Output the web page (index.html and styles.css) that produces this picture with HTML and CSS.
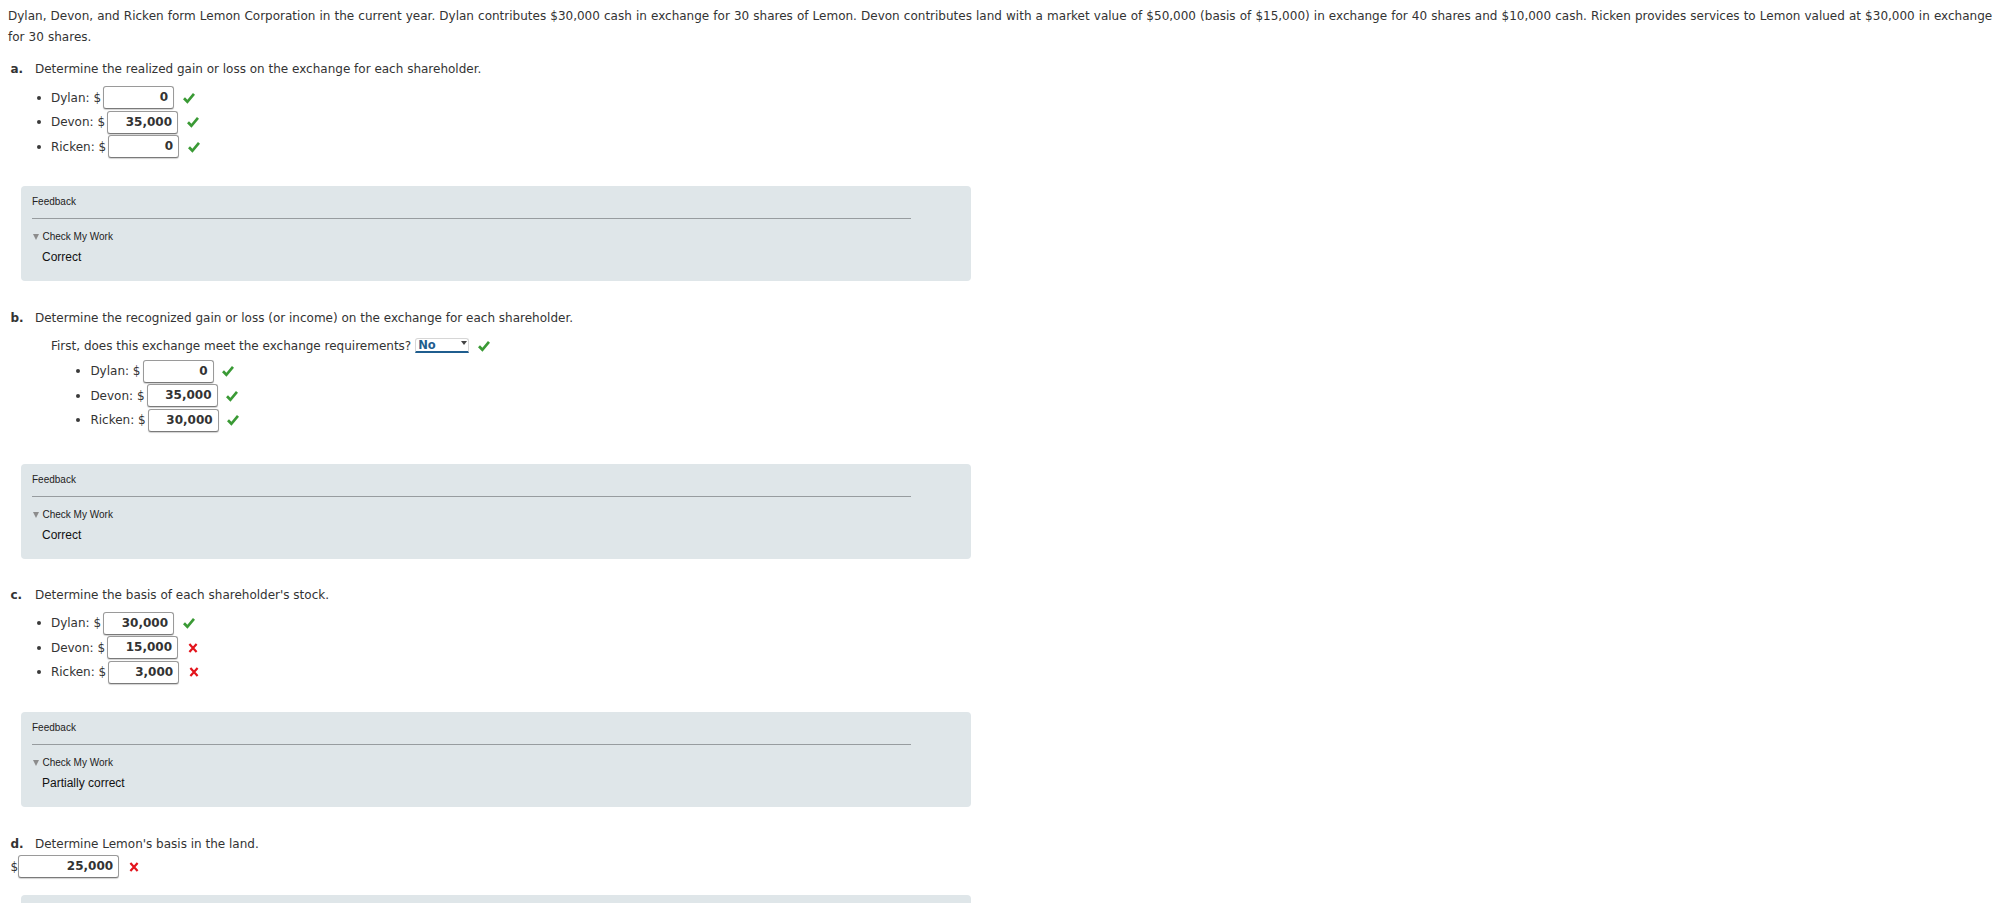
FILE: index.html
```html
<!DOCTYPE html>
<html lang="en">
<head>
<meta charset="utf-8">
<title>Lemon Corporation</title>
<link rel="stylesheet" href="styles.css">
</head>
<body>
<div class="page">
  <p class="intro">Dylan, Devon, and Ricken form Lemon Corporation in the current year. Dylan contributes $30,000 cash in exchange for 30 shares of Lemon. Devon contributes land with a market value of $50,000 (basis of $15,000) in exchange for 40 shares and $10,000 cash. Ricken provides services to Lemon valued at $30,000 in exchange for 30 shares.</p>

  <section class="part">
    <div class="q first"><span class="lbl">a.</span><span>Determine the realized gain or loss on the exchange for each shareholder.</span></div>
    <div class="answers">
      <div class="row"><span class="dot"></span><span class="name">Dylan: $</span><span class="field">0</span><span class="icon"><svg viewBox="0 0 12 12"><path class="ok" d="M1 6.2 L4.4 9.8 L11 1.8"/></svg></span></div>
      <div class="row"><span class="dot"></span><span class="name">Devon: $</span><span class="field">35,000</span><span class="icon"><svg viewBox="0 0 12 12"><path class="ok" d="M1 6.2 L4.4 9.8 L11 1.8"/></svg></span></div>
      <div class="row"><span class="dot"></span><span class="name">Ricken: $</span><span class="field">0</span><span class="icon"><svg viewBox="0 0 12 12"><path class="ok" d="M1 6.2 L4.4 9.8 L11 1.8"/></svg></span></div>
    </div>
    <div class="feedback">
      <div class="fb-title">Feedback</div>
      <div class="fb-rule"></div>
      <div class="fb-toggle"><span class="tri"></span>Check My Work</div>
      <div class="fb-result">Correct</div>
    </div>
  </section>

  <section class="part">
    <div class="q"><span class="lbl">b.</span><span>Determine the recognized gain or loss (or income) on the exchange for each shareholder.</span></div>
    <div class="sub">First, does this exchange meet the exchange requirements?<span class="select"><span>No</span><svg class="caret" viewBox="0 0 6 4"><path d="M0 0 H6 L3 4 Z"/></svg></span><span class="icon"><svg viewBox="0 0 12 12"><path class="ok" d="M1 6.2 L4.4 9.8 L11 1.8"/></svg></span></div>
    <div class="answers deep">
      <div class="row"><span class="dot"></span><span class="name">Dylan: $</span><span class="field">0</span><span class="icon"><svg viewBox="0 0 12 12"><path class="ok" d="M1 6.2 L4.4 9.8 L11 1.8"/></svg></span></div>
      <div class="row"><span class="dot"></span><span class="name">Devon: $</span><span class="field">35,000</span><span class="icon"><svg viewBox="0 0 12 12"><path class="ok" d="M1 6.2 L4.4 9.8 L11 1.8"/></svg></span></div>
      <div class="row"><span class="dot"></span><span class="name">Ricken: $</span><span class="field">30,000</span><span class="icon"><svg viewBox="0 0 12 12"><path class="ok" d="M1 6.2 L4.4 9.8 L11 1.8"/></svg></span></div>
    </div>
    <div class="feedback fb-b">
      <div class="fb-title">Feedback</div>
      <div class="fb-rule"></div>
      <div class="fb-toggle"><span class="tri"></span>Check My Work</div>
      <div class="fb-result">Correct</div>
    </div>
  </section>

  <section class="part">
    <div class="q"><span class="lbl">c.</span><span>Determine the basis of each shareholder's stock.</span></div>
    <div class="answers">
      <div class="row"><span class="dot"></span><span class="name">Dylan: $</span><span class="field">30,000</span><span class="icon"><svg viewBox="0 0 12 12"><path class="ok" d="M1 6.2 L4.4 9.8 L11 1.8"/></svg></span></div>
      <div class="row"><span class="dot"></span><span class="name">Devon: $</span><span class="field">15,000</span><span class="icon"><svg viewBox="0 0 12 12"><path class="bad" d="M2.4 2 L9.6 10 M9.6 2 L2.4 10"/></svg></span></div>
      <div class="row"><span class="dot"></span><span class="name">Ricken: $</span><span class="field">3,000</span><span class="icon"><svg viewBox="0 0 12 12"><path class="bad" d="M2.4 2 L9.6 10 M9.6 2 L2.4 10"/></svg></span></div>
    </div>
    <div class="feedback">
      <div class="fb-title">Feedback</div>
      <div class="fb-rule"></div>
      <div class="fb-toggle"><span class="tri"></span>Check My Work</div>
      <div class="fb-result">Partially correct</div>
    </div>
  </section>

  <section class="part">
    <div class="q"><span class="lbl">d.</span><span>Determine Lemon's basis in the land.</span></div>
    <div class="row plain"><span class="name">$</span><span class="field wide">25,000</span><span class="icon"><svg viewBox="0 0 12 12"><path class="bad" d="M2.4 2 L9.6 10 M9.6 2 L2.4 10"/></svg></span></div>
    <div class="feedback fb-d"></div>
  </section>
</div>
</body>
</html>
```

FILE: styles.css
```css
html, body {
  margin: 0;
  padding: 0;
  overflow: hidden;
  background: #ffffff;
}

body {
  color: #333333;
  font-family: "DejaVu Sans", Verdana, sans-serif;
  font-size: 12px;
}

.page {
  padding: 6px 8px 0 8px;
}

.intro {
  margin: 0;
  line-height: 21px;
  word-spacing: 0.3px;
}

.q {
  display: flex;
  line-height: 21px;
  margin-top: 26.4px;
}

.q.first {
  margin-top: 11.4px;
}

.q .lbl {
  flex: none;
  width: 24.5px;
  margin-left: 2.5px;
  font-weight: bold;
}

.answers {
  margin-left: 27px;
  margin-top: 5px;
}

.answers.deep {
  margin-left: 65.7px;
  margin-top: 2.9px;
}

.row {
  display: flex;
  align-items: center;
  height: 24.5px;
}

.dot {
  flex: none;
  width: 4px;
  height: 4px;
  border-radius: 50%;
  background: #3a3a3a;
  margin-left: 2.3px;
  margin-right: 9.6px;
}

.deep .dot {
  margin-right: 10.4px;
}

.name {
  white-space: pre;
  padding-right: 2px;
}

.field {
  flex: none;
  box-sizing: border-box;
  width: 71px;
  height: 23px;
  line-height: 21px;
  padding-right: 5px;
  text-align: right;
  font-weight: bold;
  color: #333333;
  background: #ffffff;
  border: 1px solid #9a9a9a;
  border-bottom-color: #7a7a7a;
  border-radius: 3px;
  box-shadow: 0 1px 1px rgba(0, 0, 0, 0.18);
}

.field.wide {
  width: 101px;
}

.icon {
  flex: none;
  display: inline-flex;
  width: 12px;
  height: 12px;
  margin-left: 8.5px;
}

.icon svg {
  width: 12px;
  height: 12px;
  display: block;
}

.icon .ok {
  fill: none;
  stroke: #3a9a35;
  stroke-width: 2.7;
}

.icon .bad {
  fill: none;
  stroke: #e3141c;
  stroke-width: 2.2;
}

.sub {
  display: flex;
  align-items: center;
  height: 21px;
  margin-left: 43px;
  margin-top: 6.4px;
}

.select {
  display: inline-flex;
  justify-content: space-between;
  align-items: center;
  box-sizing: border-box;
  width: 54px;
  height: 15px;
  margin-left: 4px;
  padding: 0 1px 0 2px;
  border: 1px solid #d6d6d6;
  border-bottom: 2px solid #1f5d8e;
  border-radius: 3px 3px 0 0;
  font-size: 11.5px;
  font-weight: bold;
  color: #1f5d8e;
  line-height: 12px;
}

.select .caret {
  align-self: flex-start;
  width: 6px;
  height: 4px;
  margin-top: 2px;
  fill: #444444;
}

.plain {
  margin-left: 2.5px;
  height: 24.5px;
}

.plain .name {
  padding-right: 0;
}

.feedback {
  box-sizing: border-box;
  width: 950px;
  margin: 27.5px 0 0 13px;
  padding: 10px 60px 17px 11px;
  background: #dfe6e9;
  border-radius: 4px;
  font-family: "Liberation Sans", Arial, sans-serif;
  color: #222222;
}

.feedback.fb-b {
  margin-top: 31.2px;
}

.feedback.fb-d {
  margin-top: 15.6px;
  height: 95px;
}

.fb-title {
  font-size: 10px;
  line-height: 12px;
}

.fb-rule {
  margin-top: 10px;
  border-top: 1px solid #979c9f;
}

.fb-toggle {
  display: flex;
  align-items: center;
  margin-top: 12px;
  font-size: 10px;
  line-height: 12px;
}

.tri {
  width: 0;
  height: 0;
  margin-left: 0.5px;
  margin-right: 4px;
  border-left: 3px solid transparent;
  border-right: 3px solid transparent;
  border-top: 6px solid #8c8c8c;
}

.fb-result {
  margin-top: 7px;
  padding-left: 10px;
  font-size: 12px;
  line-height: 14px;
  color: #111111;
}
```
